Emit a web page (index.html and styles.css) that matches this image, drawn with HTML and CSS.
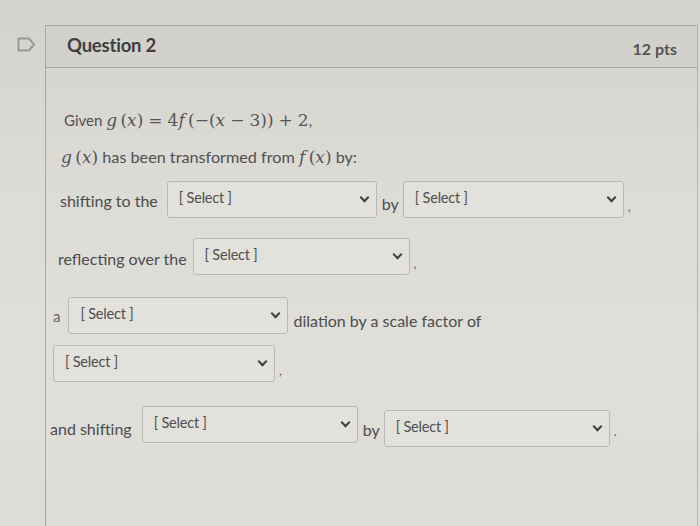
FILE: index.html
```html
<!DOCTYPE html>
<html>
<head>
<meta charset="utf-8">
<link rel="stylesheet" href="styles.css">
</head>
<body>
<div class="page">
  <div class="gutter">
    <svg class="flag" width="19" height="15" viewBox="0 0 19 15"><path d="M1.5 1.5 H12 L17 7.5 L12 13.5 H1.5 Z" fill="none" stroke="#9a9995" stroke-width="2" stroke-linejoin="round"/></svg>
  </div>
  <div class="panel">
    <div class="header">
      <span class="title">Question 2</span>
      <span class="pts">12 pts</span>
    </div>
    <div class="content">
      <p class="line l1">Given <span class="m"><i>g</i>&#8201;(<i>x</i>)<span class="op">=</span>4<i>f</i>&#8201;(−(<i>x</i><span class="op">−</span>3))<span class="op">+</span>2</span>,</p>
      <p class="line l2"><span class="m"><i>g</i>&#8201;(<i>x</i>)</span> has been transformed from <span class="m"><i>f</i>&#8201;(<i>x</i>)</span> by:</p>

      <div class="row r1">
        <span class="txt">shifting to the</span>
        <div class="sel w210"><span class="ph">[ Select ]</span><span class="chev"></span></div>
        <span class="txt by">by</span>
        <div class="sel w221"><span class="ph">[ Select ]</span><span class="chev"></span></div>
        <span class="txt punct">,</span>
      </div>

      <div class="row r2">
        <span class="txt">reflecting over the</span>
        <div class="sel w217"><span class="ph">[ Select ]</span><span class="chev"></span></div>
        <span class="txt punct">,</span>
      </div>

      <div class="row r3">
        <span class="txt a">a</span>
        <div class="sel w220"><span class="ph">[ Select ]</span><span class="chev"></span></div>
        <span class="txt low">dilation by a scale factor of</span>
      </div>

      <div class="row r4">
        <div class="sel w222"><span class="ph">[ Select ]</span><span class="chev"></span></div>
        <span class="txt punct">,</span>
      </div>

      <div class="row r5">
        <span class="txt">and shifting</span>
        <div class="sel w216"><span class="ph">[ Select ]</span><span class="chev"></span></div>
        <span class="txt by low">by</span>
        <div class="sel w226 down"><span class="ph">[ Select ]</span><span class="chev"></span></div>
        <span class="txt punct">.</span>
      </div>
    </div>
  </div>
</div>
</body>
</html>
```

FILE: styles.css
```css
* { box-sizing: border-box; }
html, body { margin: 0; padding: 0; }
body {
  width: 700px;
  height: 526px;
  overflow: hidden;
  background: linear-gradient(180deg, #d3d2cd 0%, #dcdbd6 35%, #e0dfda 70%, #dddcd7 100%);
  font-family: Lato, "Open Sans", sans-serif;
  color: #4a4a4a;
}
.page {
  display: flex;
  height: 526px;
  padding-top: 25px;
}
.gutter {
  width: 45px;
  flex: none;
  position: relative;
}
.flag {
  position: absolute;
  left: 17px;
  top: 12px;
}
.panel {
  width: 653px;
  flex: none;
  border-left: 1px solid #a9a8a3;
  border-top: 1px solid #a9a8a3;
  border-right: 1px solid #b5b4af;
}
.header {
  height: 42px;
  display: flex;
  align-items: center;
  justify-content: space-between;
  padding: 0 20px 0 21px;
  background: #d2d1cc;
  border-bottom: 1px solid #a3a29d;
}
.title {
  font-size: 18.5px;
  font-weight: 700;
  color: #3f3f3f;
  letter-spacing: -0.2px;
  margin-top: -3px;
}
.pts {
  font-size: 16px;
  font-weight: 700;
  color: #555;
  padding-top: 4px;
}
.content {
  padding-left: 17px;
}
.line {
  margin: 0;
  font-size: 15px;
  line-height: 20px;
  color: #505050;
}
.l1 { margin-top: 42px; margin-left: 1px; }
.l2 { margin-top: 17px; margin-left: -2px; font-size: 16.2px; }
.m {
  font-family: "DejaVu Serif", "Liberation Serif", serif;
  font-size: 17px;
  color: #555;
}
.m i { font-style: italic; }
.op { margin: 0 5px; }
.row {
  display: flex;
  align-items: center;
  font-size: 16px;
  color: #4c4c4c;
}
.r1 { margin-top: 14px; margin-left: -3px; }
.r2 { margin-top: 20px; margin-left: -5px; }
.r3 { margin-top: 22px; margin-left: -12px; }
.r4 { margin-top: 11px; margin-left: -10px; }
.r5 { margin-top: 20px; margin-left: -13px; }
.txt { white-space: nowrap; }
.txt.a { margin-right: 8px; margin-left: 2px; color: #666; font-size: 15px; }
.by { margin: 0 4px 0 5px; padding-top: 6px; }
.low { padding-top: 10px; }
.r1 .by { padding-top: 8px; }
.punct { margin-left: 4px; padding-top: 12px; font-size: 13px; color: #666; }
.r1 > .txt:first-child { margin-right: 9px; padding-top: 2px; }
.r2 > .txt:first-child { margin-right: 6px; padding-top: 4px; }
.r5 > .txt:first-child { margin-right: 10px; padding-top: 8px; }
.r3 .low { margin-left: 5px; }
.sel {
  position: relative;
  height: 37px;
  border: 1px solid #b9b8b3;
  border-radius: 3px;
  background: #e2e1dc;
  padding: 5px 0 0 11px;
}
.sel.down { margin-top: 8px; }
.ph {
  font-size: 14.5px;
  color: #505050;
  letter-spacing: -0.2px;
}
.chev {
  position: absolute;
  right: 8px;
  top: 12px;
  width: 7px;
  height: 7px;
  border-right: 2px solid #3f3f3f;
  border-bottom: 2px solid #3f3f3f;
  transform: rotate(45deg);
}
.w210 { width: 210px; }
.w221 { width: 221px; }
.w217 { width: 217px; }
.w220 { width: 220px; }
.w222 { width: 222px; }
.w216 { width: 216px; }
.w226 { width: 226px; }
```
